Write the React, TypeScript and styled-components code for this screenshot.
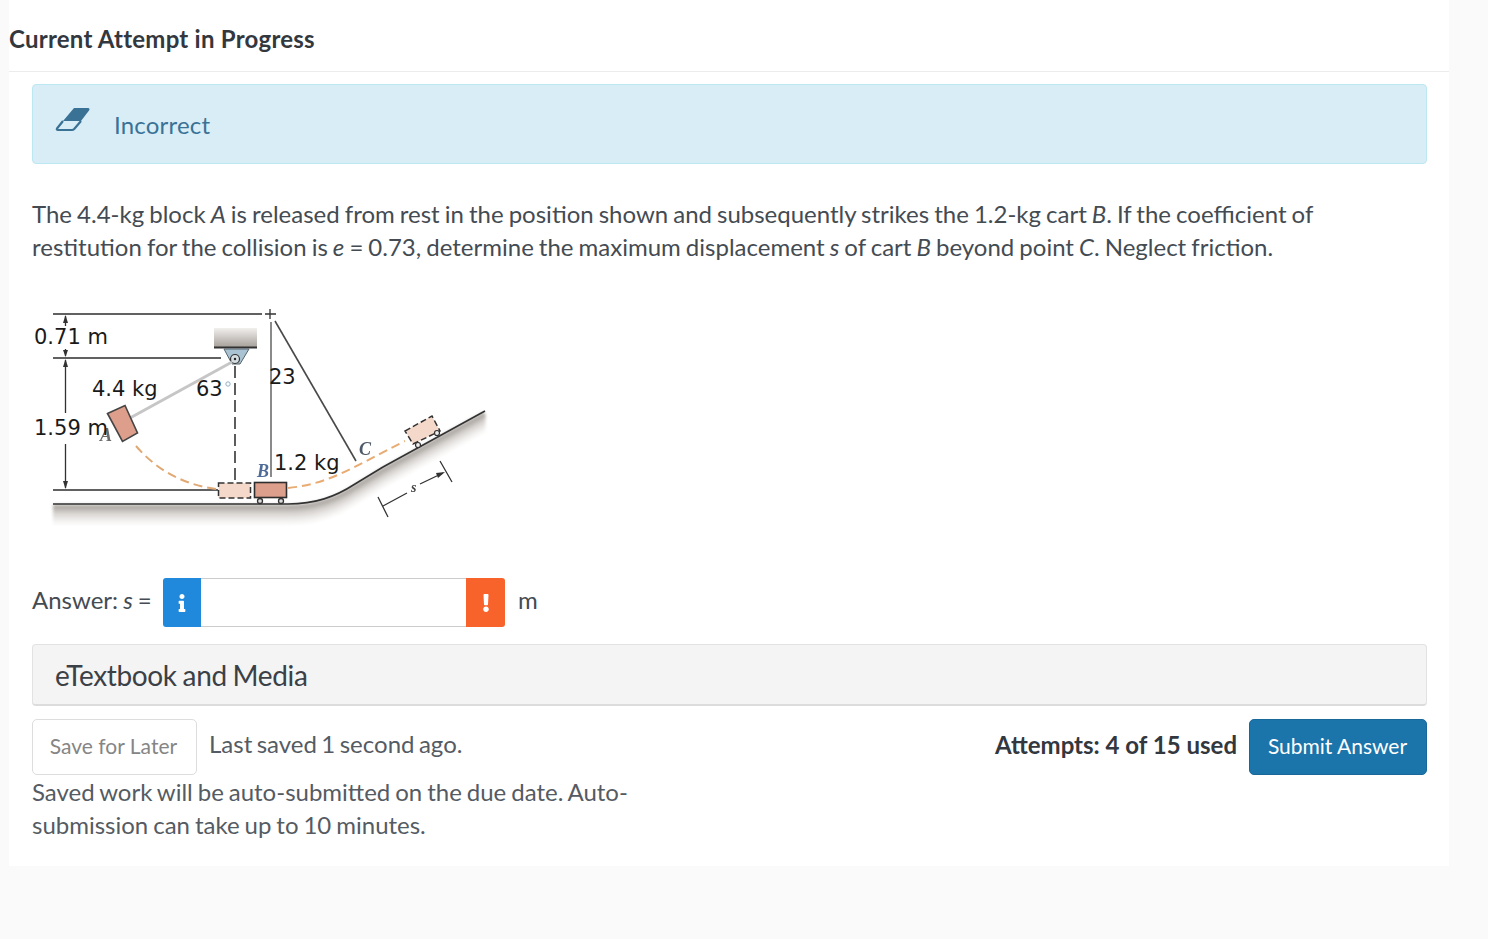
import React from 'react';
import styled, { createGlobalStyle } from 'styled-components';
import { FaInfo, FaExclamation } from 'react-icons/fa';

const Global = createGlobalStyle`
  html, body {
    margin: 0;
    padding: 0;
    background: #fafafa;
    font-family: Lato, "Open Sans", sans-serif;
  }
  * { box-sizing: border-box; }
`;

const Page = styled.div`
  min-height: 939px;
  padding-left: 9px;
`;

const Card = styled.main`
  width: 1440px;
  height: 866px;
  background: #fff;
`;

const Header = styled.header`
  height: 72px;
  border-bottom: 1px solid #ececec;
  padding-top: 24px;
  font-size: 24px;
  line-height: 30px;
  font-weight: 700;
  letter-spacing: 0.24px;
  color: #33383f;
`;

const Body = styled.div`
  padding: 12px 22px 0 23px;
`;

const Alert = styled.div`
  height: 80px;
  display: flex;
  align-items: center;
  gap: 23px;
  padding: 0 22px;
  background: #d9edf7;
  border: 1px solid #bce8f1;
  border-radius: 4px;
  color: #3a7296;
  font-size: 24px;
`;

const AlertIcon = styled.svg`
  width: 36px;
  height: 26px;
  margin-top: -10px;
  flex: none;
`;

const AlertText = styled.span`
  margin-top: 1px;
  letter-spacing: 0.2px;
`;

const Problem = styled.p`
  margin: 33px 0 0;
  font-size: 24px;
  line-height: 33px;
  color: #444b52;
  word-spacing: -1.1px;
`;

const Figure = styled.svg`
  display: block;
  width: 470px;
  height: 240px;
  margin-top: 32px;
`;

const Label = styled.text`
  font-family: "DejaVu Sans", sans-serif;
  font-size: 21px;
  fill: #1a1a1a;
`;

const SerifMark = styled.text<{ $size: number; $color: string }>`
  font-family: "Liberation Serif", serif;
  font-style: italic;
  font-weight: 700;
  font-size: ${(p) => p.$size}px;
  fill: ${(p) => p.$color};
`;

const AnswerRow = styled.div`
  display: flex;
  align-items: center;
  margin-top: 43px;
  height: 49px;
  font-size: 24px;
  color: #444b52;
`;

const AnswerLabel = styled.span`
  width: 131px;
  flex: none;
  margin-top: -6px;
  word-spacing: -1.1px;
`;

const AddOn = styled.span<{ $color: string; $side: 'left' | 'right' }>`
  width: ${(p) => (p.$side === 'left' ? 38 : 39)}px;
  height: 49px;
  display: flex;
  align-items: center;
  justify-content: center;
  flex: none;
  background: ${(p) => p.$color};
  color: #fff;
  font-size: 18px;
  border-radius: ${(p) => (p.$side === 'left' ? '3px 0 0 3px' : '0 3px 3px 0')};
`;

const Field = styled.input`
  width: 265px;
  height: 49px;
  flex: none;
  border: 1px solid #ccc;
  border-left: 0;
  border-right: 0;
  outline: 0;
  background: #fff;
`;

const Unit = styled.span`
  margin-left: 13px;
  margin-top: -6px;
`;

const MediaPanel = styled.div`
  height: 62px;
  margin-top: 17px;
  padding-left: 22px;
  display: flex;
  align-items: center;
  background: #f4f4f4;
  border: 1px solid #e2e2e2;
  border-bottom: 2px solid #dcdcdc;
  border-radius: 4px;
  font-size: 28px;
  letter-spacing: -0.35px;
  word-spacing: -1px;
  color: #3b4047;
`;

const ActionRow = styled.div`
  display: flex;
  align-items: flex-start;
  margin-top: 13px;
`;

const SaveButton = styled.button`
  width: 165px;
  height: 56px;
  flex: none;
  background: #fff;
  border: 1px solid #ddd;
  border-radius: 5px;
  font: 21px Lato, sans-serif;
  color: #858585;
  padding: 0 2px 4px 0;
`;

const SavedAt = styled.span`
  margin-left: 12px;
  font-size: 24px;
  line-height: 50px;
  word-spacing: -1.7px;
  color: #555b63;
`;

const Attempts = styled.span`
  margin-left: auto;
  font-size: 24px;
  line-height: 52px;
  font-weight: 700;
  color: #33383f;
`;

const SubmitButton = styled.button`
  width: 178px;
  height: 56px;
  flex: none;
  margin-left: 12px;
  background: #1c75aa;
  border: 1px solid #19689a;
  border-radius: 5px;
  font: 21px Lato, sans-serif;
  color: #fff;
  padding: 0 1px 4px 0;
`;

const Notice = styled.p`
  margin: 0;
  width: 620px;
  font-size: 24px;
  line-height: 33px;
  word-spacing: -1.2px;
  color: #555b63;
`;

const GROUND = 'M53 504H288C315 504 335 497 355 484L383 467L485 411';

const Diagram: React.FC = () => (
  <Figure viewBox="32 295 470 240" aria-label="Pendulum block and cart">
    <defs>
      <linearGradient id="ceil" x1="0" y1="0" x2="0" y2="1">
        <stop offset="0" stopColor="#f2f0ee" />
        <stop offset="1" stopColor="#a8a19b" />
      </linearGradient>
      <filter id="soft" x="-5%" y="-5%" width="110%" height="110%">
        <feGaussianBlur stdDeviation="0.55" />
      </filter>
      <filter id="shade" x="-5%" y="-10%" width="110%" height="120%">
        <feGaussianBlur stdDeviation="1.6" />
      </filter>
    </defs>

    {/* floor and ramp shadow */}
    <g filter="url(#shade)" fill="none" strokeWidth="5">
      <path d={GROUND} transform="translate(0 18)" stroke="#f7f6f5" />
      <path d={GROUND} transform="translate(0 14)" stroke="#ebe9e7" />
      <path d={GROUND} transform="translate(0 10)" stroke="#dbd8d5" />
      <path d={GROUND} transform="translate(0 6)" stroke="#c8c4c0" />
      <path d={GROUND} transform="translate(0 3)" stroke="#b3aea9" />
    </g>

    <g filter="url(#soft)">
      <path d={GROUND} fill="none" stroke="#333" strokeWidth="1.6" />

      {/* dimension lines */}
      <path d="M53 314H262M53 358H221M53 490H218" stroke="#2e2e2e" strokeWidth="1.5" />
      <path d="M265 314H276M270 309V319" stroke="#333" strokeWidth="1.3" />
      <path d="M65.500 316V326M65.500 349V356M65.500 360V413M65.500 444V488" stroke="#333" strokeWidth="1.3" />
      <path d="M65.500 315l-2.500 8h5zM65.500 357l-2.500-7h5zM65.500 359l-2.500 8h5zM65.500 489l-2.500-8h5z" fill="#333" />

      {/* support */}
      <rect x="214" y="328" width="43" height="19" fill="url(#ceil)" />
      <path d="M214 347.500H257" stroke="#333" strokeWidth="1.8" />
      <path d="M224 349H249L240 364H232Z" fill="#a9c3d3" stroke="#55636d" />
      <circle cx="235" cy="359" r="4.500" fill="#d4dde2" stroke="#333" strokeWidth="1.2" />
      <circle cx="235" cy="359" r="1.200" fill="#222" />

      {/* rod and block A */}
      <path d="M232 362L130 418" stroke="#c6c6c6" strokeWidth="3" />
      <path d="M107.500 413.500L125 405.500L137.500 433L122.500 441.500Z" fill="#dd9f8b" stroke="#444" strokeWidth="1.6" />
      <circle cx="228" cy="384" r="2.200" fill="none" stroke="#8fb0c4" />
      <path d="M235 366V482" stroke="#333" strokeWidth="1.6" strokeDasharray="12 5" />

      {/* swing path */}
      <path
        d="M136 446C155 468 180 484 216 489"
        fill="none"
        stroke="#e0a873"
        strokeWidth="2"
        strokeDasharray="9 5"
      />
      <path d="M288 488C330 484 355 466 405 441" fill="none" stroke="#e8ab72" strokeWidth="2" strokeDasharray="9 5" />

      {/* carts */}
      <rect x="218.500" y="483" width="32" height="15" fill="#f4d8ca" stroke="#333" strokeWidth="1.5" strokeDasharray="6 3" />
      <rect x="254.500" y="482.500" width="32" height="15" fill="#dc9f8b" stroke="#2e2e2e" strokeWidth="1.6" />
      <circle cx="260" cy="501" r="2.500" fill="#ddd" stroke="#333" strokeWidth="1.3" />
      <circle cx="281" cy="501" r="2.500" fill="#ddd" stroke="#333" strokeWidth="1.3" />
      <path d="M405 431L432 416L440 431L413 444Z" fill="#f4d8ca" stroke="#333" strokeWidth="1.5" strokeDasharray="6 3" />
      <circle cx="418" cy="445" r="2.500" fill="#eee" stroke="#333" strokeWidth="1.2" />
      <circle cx="437" cy="433" r="2.500" fill="#eee" stroke="#333" strokeWidth="1.2" />

      {/* angle lines */}
      <path d="M271 322V477" stroke="#8a8a8a" strokeWidth="2" />
      <path d="M275 321L356 461" stroke="#4a4a4a" strokeWidth="1.600" />

      {/* s dimension */}
      <path d="M378 497L388 517M383 506L407 493M420 484L443 473M440 461L452 482" stroke="#333" strokeWidth="1.300" fill="none" />
      <path d="M445 472L436 473L438 478Z" fill="#333" />
    </g>

    <SerifMark x="100" y="441" $size={18} $color="#6a6a6a" filter="url(#soft)">A</SerifMark>
    <SerifMark x="257" y="477" $size={18} $color="#4f6c98" filter="url(#soft)">B</SerifMark>
    <SerifMark x="359" y="455" $size={18} $color="#4d5a6a" filter="url(#soft)">C</SerifMark>
    <SerifMark x="411" y="492" $size={14} $color="#444" filter="url(#soft)">s</SerifMark>

    <Label x="34" y="344">0.71 m</Label>
    <Label x="92" y="396">4.4 kg</Label>
    <Label x="196" y="396">63</Label>
    <Label x="34" y="435">1.59 m</Label>
    <Label x="269" y="384">23</Label>
    <Label x="274" y="470">1.2 kg</Label>
  </Figure>
);

const App: React.FC = () => (
  <Page>
    <Global />
    <Card>
      <Header>Current Attempt in Progress</Header>
      <Body>
        <Alert>
          <AlertIcon viewBox="0 0 36 26">
            <path d="M19 2H33C34.500 2 35 3 34 4.500L26 15H8Z" fill="#3a7296" />
            <path
              d="M8 15L2 22.500C1.500 23.300 1.800 24 3 24H17C18 24 18.600 23.600 19.200 23L26 15"
              fill="none"
              stroke="#3a7296"
              strokeWidth="2.200"
              strokeLinejoin="round"
            />
          </AlertIcon>
          <AlertText>Incorrect</AlertText>
        </Alert>

        <Problem>
          The 4.4-kg block <i>A</i> is released from rest in the position shown and subsequently
          strikes the 1.2-kg cart <i>B</i>. If the coefficient of restitution for the collision is{' '}
          <i>e</i> = 0.73, determine the maximum displacement <i>s</i> of cart <i>B</i> beyond point{' '}
          <i>C</i>. Neglect friction.
        </Problem>

        <Diagram />

        <AnswerRow>
          <AnswerLabel>
            Answer: <i>s</i> =
          </AnswerLabel>
          <AddOn $color="#2089dc" $side="left">
            <FaInfo />
          </AddOn>
          <Field aria-label="s" />
          <AddOn $color="#f7632a" $side="right">
            <FaExclamation />
          </AddOn>
          <Unit>m</Unit>
        </AnswerRow>

        <MediaPanel>eTextbook and Media</MediaPanel>

        <ActionRow>
          <SaveButton>Save for Later</SaveButton>
          <SavedAt>Last saved 1 second ago.</SavedAt>
          <Attempts>Attempts: 4 of 15 used</Attempts>
          <SubmitButton>Submit Answer</SubmitButton>
        </ActionRow>

        <Notice>
          Saved work will be auto-submitted on the due date. Auto-submission can take up to 10
          minutes.
        </Notice>
      </Body>
    </Card>
  </Page>
);

export default App;
